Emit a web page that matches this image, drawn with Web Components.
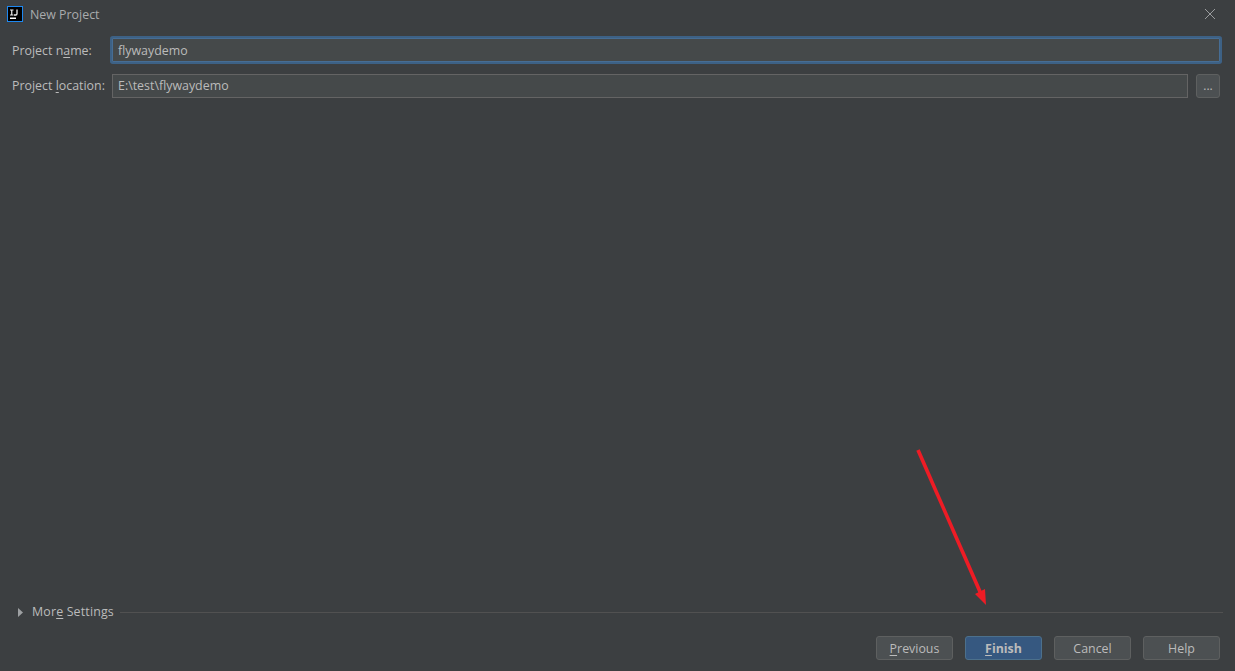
<!DOCTYPE html>
<html>
<head>
<meta charset="utf-8">
<title>New Project</title>
<style>
  html, body { margin: 0; height: 100%; }
  body { background: #3c3f41; overflow: hidden; font: 12.4px "Open Sans", sans-serif; color: #bbbbbb; }
</style>
</head>
<body>
<ij-dialog>
  <ij-titlebar slot="title">New Project</ij-titlebar>
  <ij-field label="Project n" mnemonic="a" rest="me:" value="flywaydemo" focused></ij-field>
  <ij-field label="Project " mnemonic="l" rest="ocation:" value="E:\test\flywaydemo" browse></ij-field>
  <ij-more slot="more"></ij-more>
  <ij-button slot="buttons" mnemonic="P" rest="revious"></ij-button>
  <ij-button slot="buttons" mnemonic="F" rest="inish" primary></ij-button>
  <ij-button slot="buttons" rest="Cancel"></ij-button>
  <ij-button slot="buttons" rest="Help"></ij-button>
</ij-dialog>
<red-arrow></red-arrow>

<script>
class IjDialog extends HTMLElement {
  constructor() {
    super();
    this.attachShadow({ mode: "open" });
    this.shadowRoot.innerHTML = `
<style>
  :host { display: flex; flex-direction: column; height: 671px; box-sizing: border-box; }
  .fields { display: flex; flex-direction: column; gap: 12px; padding: 8px 15px 0 12px; flex: 1; }
  .buttons { display: flex; justify-content: flex-end; gap: 12px; padding: 14px 15px 11px 0; }
</style>
<slot name="title"></slot>
<div class="fields"><slot></slot></div>
<slot name="more"></slot>
<div class="buttons"><slot name="buttons"></slot></div>`;
  }
}

class IjTitlebar extends HTMLElement {
  constructor() {
    super();
    this.attachShadow({ mode: "open" });
    this.shadowRoot.innerHTML = `
<style>
  :host { display: flex; align-items: center; height: 30px; padding: 0 19px 2px 7px; box-sizing: border-box; }
  .logo { width: 16px; height: 16px; margin-right: 7px; flex: none; }
  .name { flex: 1; color: #a9abad; }
  .close { width: 12px; height: 12px; flex: none; }
</style>
<svg class="logo" viewBox="0 0 16 16">
  <rect x="0.5" y="0.5" width="15" height="15" fill="#000" stroke="#1e88f0"/>
  <path d="M3 4h3.500M4.750 4v5M3 9h3.500" stroke="#eee" stroke-width="1.200" fill="none"/>
  <path d="M7 9h1.800q1.200 0 1.200-1.200V3.500" stroke="#eee" stroke-width="1.300" fill="none"/>
  <path d="M3 12.250h6" stroke="#fff" stroke-width="1.500"/>
</svg>
<span class="name"><slot></slot></span>
<svg class="close" viewBox="0 0 12 12"><path d="M1 1l10 10M11 1L1 11" stroke="#9a9c9e" stroke-width="1" fill="none"/></svg>`;
  }
}

class IjField extends HTMLElement {
  constructor() {
    super();
    this.attachShadow({ mode: "open" });
    const browse = this.hasAttribute("browse");
    const focused = this.hasAttribute("focused");
    this.shadowRoot.innerHTML = `
<style>
  :host { display: flex; align-items: center; height: 24px; }
  :host([browse]) .label { padding-bottom: 2px; }
  .label { width: 100px; flex: none; white-space: pre; }
  u { text-underline-offset: 2px; text-decoration-thickness: 1px; }
  .input {
    flex: 1; height: 24px; box-sizing: border-box; padding: 0 5px; line-height: 22px;
    background: #45494a; border: 1px solid #646464; color: #bbbbbb;
  }
  .input.focused { border-color: #466d94; box-shadow: 0 0 0 2px #3d6185; border-radius: 1px; padding-top: 1px; }
  .more {
    width: 24px; height: 24px; box-sizing: border-box; margin-left: 8px; flex: none;
    background: #4c5052; border: 1px solid #5e6060; border-radius: 3px;
    display: flex; align-items: flex-end; justify-content: center; padding-bottom: 5px; line-height: 1;
    font-size: 12px;
  }
</style>
<span class="label">${this.getAttribute("label")}<u>${this.getAttribute("mnemonic")}</u>${this.getAttribute("rest")}</span>
<div class="input ${focused ? "focused" : ""}">${this.getAttribute("value")}</div>
${browse ? '<div class="more">...</div>' : ""}`;
  }
}

class IjMore extends HTMLElement {
  constructor() {
    super();
    this.attachShadow({ mode: "open" });
    this.shadowRoot.innerHTML = `
<style>
  :host { display: flex; align-items: center; height: 20px; padding: 0 12px 0 18px; }
  svg { width: 5px; height: 9px; margin-right: 9px; flex: none; }
  span { letter-spacing: 0.16px; padding-bottom: 2px; }
  u { text-underline-offset: 2px; text-decoration-thickness: 1px; }
  .line { flex: 1; height: 1px; background: #515151; margin-left: 6px; }
</style>
<svg viewBox="0 0 5 9"><path d="M0 0l5 4.500L0 9z" fill="#9da0a2"/></svg>
<span>Mor<u>e</u> Settings</span>
<div class="line"></div>`;
  }
}

class IjButton extends HTMLElement {
  constructor() {
    super();
    this.attachShadow({ mode: "open" });
    const m = this.getAttribute("mnemonic");
    this.shadowRoot.innerHTML = `
<style>
  :host { display: block; }
  button {
    display: block; width: 77px; height: 24px; box-sizing: border-box; padding: 0;
    font: inherit; color: #bbbbbb; background: #4c5052;
    border: 1px solid #5e6060; border-radius: 3px;
  }
  :host([primary]) button { background: #365880; border-color: #4c708c; font-weight: 700; color: #bbbbbb; }
  u { text-underline-offset: 2px; text-decoration-thickness: 1px; }
</style>
<button>${m ? `<u>${m}</u>` : ""}${this.getAttribute("rest")}</button>`;
  }
}

class RedArrow extends HTMLElement {
  constructor() {
    super();
    this.attachShadow({ mode: "open" });
    this.shadowRoot.innerHTML = `
<style>
  :host { position: absolute; left: 910px; top: 445px; width: 85px; height: 165px; pointer-events: none; }
  svg { display: block; width: 100%; height: 100%; }
</style>
<svg viewBox="910 445 85 165">
  <path d="M918 450L981 594" stroke="#ee1c25" stroke-width="3.600" fill="none"/>
  <path d="M986 605L975 594L985 589z" fill="#ee1c25"/>
</svg>`;
  }
}

customElements.define("ij-dialog", IjDialog);
customElements.define("ij-titlebar", IjTitlebar);
customElements.define("ij-field", IjField);
customElements.define("ij-more", IjMore);
customElements.define("ij-button", IjButton);
customElements.define("red-arrow", RedArrow);
</script>
</body>
</html>
